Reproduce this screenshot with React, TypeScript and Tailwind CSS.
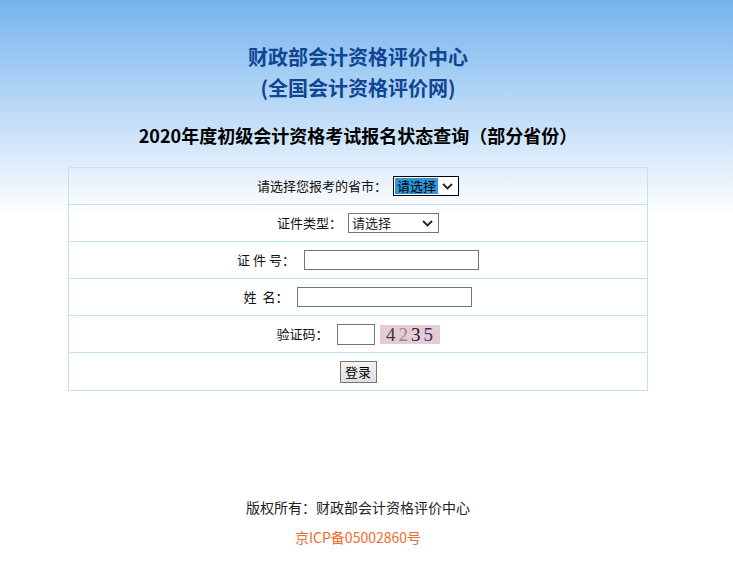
import { ReactNode } from "react";

function Chevron() {
  return (
    <svg width="11" height="7" viewBox="0 0 11 7" className="shrink-0">
      <path d="M1 1l4.5 4.5L10 1" fill="none" stroke="#222" strokeWidth="1.8" />
    </svg>
  );
}

function FakeSelect({ width, focused }: { width: number; focused?: boolean }) {
  return (
    <div
      className={`flex h-[20px] items-center justify-between bg-white pl-[1px] pr-[5px] ${
        focused ? "border border-black" : "border border-[#767676]"
      }`}
      style={{ width }}
    >
      <span
        className={`px-[2px] text-[13px] leading-[16px] ${
          focused ? "bg-[#2f97d9] text-black" : "text-[#222]"
        }`}
      >
        请选择
      </span>
      <Chevron />
    </div>
  );
}

function Row({ children, last }: { children: ReactNode; last?: boolean }) {
  return (
    <div
      className={`flex h-[37px] items-center justify-center ${
        last ? "" : "border-b border-[#bfe3f3]"
      }`}
    >
      {children}
    </div>
  );
}

function Captcha() {
  return (
    <div className="ml-[5px] flex h-[19px] w-[60px] items-center justify-center gap-[3px] bg-[#e4cbd5] font-['Liberation_Serif','Times_New_Roman',serif] text-[19px] leading-[19px]">
      <span className="text-[#3d3d3d]">4</span>
      <span className="text-[#8a8a94]">2</span>
      <span className="text-[#1a1a1a]">3</span>
      <span className="text-[#3b2f66]">5</span>
    </div>
  );
}

export default function App() {
  return (
    <div className="min-h-[563px] bg-white bg-[linear-gradient(to_bottom,#76b4ee,#ffffff_215px)] bg-no-repeat font-['Microsoft_YaHei','Noto_Sans_CJK_SC',sans-serif] text-black">
      <div className="w-[716px]">
        <div className="pt-[41px] text-center text-[20px] font-bold leading-[31px] text-[#0f4593]">
          <div>财政部会计资格评价中心</div>
          <div>(全国会计资格评价网)</div>
        </div>

        <h1 className="mt-[20px] text-center text-[18px] font-bold leading-[24px]">
          2020年度初级会计资格考试报名状态查询（部分省份）
        </h1>

        <div className="mx-auto mt-[20px] w-[580px] border border-[#bfe3f3] text-[13px] text-[#111]">
          <Row>
            <span className="mr-[6px]">请选择您报考的省市：</span>
            <FakeSelect width={66} focused />
          </Row>
          <Row>
            <span className="mr-[6px]">证件类型：</span>
            <FakeSelect width={91} />
          </Row>
          <Row>
            <span className="mr-[9px]">证 件 号：</span>
            <input className="h-[20px] w-[175px] border border-[#767676] bg-white outline-none" />
          </Row>
          <Row>
            <span className="mr-[9px]">姓&nbsp;&nbsp;名：</span>
            <input className="h-[20px] w-[175px] border border-[#767676] bg-white outline-none" />
          </Row>
          <Row>
            <span className="mr-[8px]">验证码：</span>
            <input className="h-[21px] w-[38px] border border-[#767676] bg-white outline-none" />
            <Captcha />
          </Row>
          <Row last>
            <button className="h-[22px] w-[37px] border border-[#767676] bg-[linear-gradient(#f4f4f4,#dedede)] text-[13px] leading-none text-black">
              登录
            </button>
          </Row>
        </div>

        <div className="mt-[101px] text-center text-[14px] leading-[30px]">
          <div className="text-[#222]">版权所有：财政部会计资格评价中心</div>
          <div className="text-[#f26a2d]">京ICP备05002860号</div>
        </div>
      </div>
    </div>
  );
}
